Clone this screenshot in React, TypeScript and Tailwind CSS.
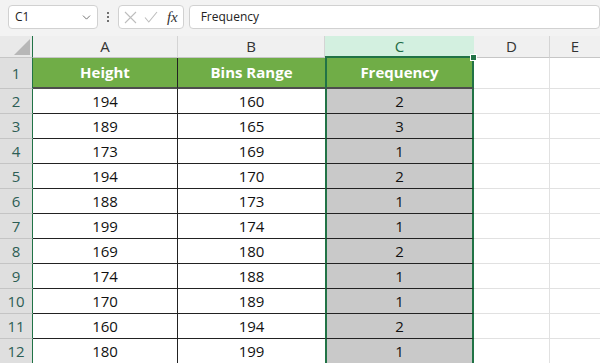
import { ChevronDown } from "lucide-react";

const rows: [number, number, number][] = [
  [194, 160, 2],
  [189, 165, 3],
  [173, 169, 1],
  [194, 170, 2],
  [188, 173, 1],
  [199, 174, 1],
  [169, 180, 2],
  [174, 188, 1],
  [170, 189, 1],
  [160, 194, 2],
  [180, 199, 1],
];

const font = { fontFamily: '"Open Sans", "Noto Sans", sans-serif' };

function Toolbar() {
  return (
    <div className="h-[36px] bg-[#f3f3f3] flex items-start pt-[5px] pl-[8px]">
      <div className="w-[92px] h-[24px] bg-white border border-[#d1d1d1] rounded-[4px] flex items-center justify-between pl-[6px] pr-[4px]">
        <span className="text-[12px] text-[#222]">C1</span>
        <ChevronDown size={13} strokeWidth={1.5} className="text-[#555]" />
      </div>
      <div className="w-[20px] h-[24px] flex flex-col items-center justify-center gap-[2px]">
        <span className="w-[2px] h-[2px] bg-[#444] rounded-full" />
        <span className="w-[2px] h-[2px] bg-[#444] rounded-full" />
        <span className="w-[2px] h-[2px] bg-[#444] rounded-full" />
      </div>
      <div className="w-[67px] h-[24px] bg-white border border-[#d1d1d1] rounded-[4px] flex items-center pl-[5px] gap-[7px]">
        <svg width="13" height="13" viewBox="0 0 13 13" fill="none" stroke="#bdbdbd" strokeWidth="1.1">
          <path d="M1 1 L12 12 M12 1 L1 12" />
        </svg>
        <svg width="14" height="12" viewBox="0 0 14 12" fill="none" stroke="#bdbdbd" strokeWidth="1.1">
          <path d="M1 6.5 L4.8 11 L13 1" />
        </svg>
        <span
          className="text-[15px] italic text-[#333] leading-none ml-[2px]"
          style={{ fontFamily: '"Liberation Serif", "DejaVu Serif", serif' }}
        >
          fx
        </span>
      </div>
      <div className="w-[420px] h-[24px] ml-[5px] bg-white border border-[#d1d1d1] rounded-[4px] flex items-center pl-[11px]">
        <span className="text-[12px] text-[#222]">Frequency</span>
      </div>
    </div>
  );
}

function ColumnHeaders() {
  return (
    <div className="h-[22px] flex text-[15px] text-[#333]">
      <div className="w-[33px] bg-[#e9e9e9] border-r border-r-[#217346] border-b border-b-[#c6c6c6] relative">
        <svg className="absolute right-[2px] bottom-[2px]" width="16" height="16" viewBox="0 0 16 16">
          <path d="M0 16 L16 0 L16 16 Z" fill="#b7b7b7" />
        </svg>
      </div>
      <div className="w-[145px] bg-[#f0f0f0] border-r border-[#d4d4d4] border-b border-b-[#c6c6c6] flex items-center justify-center">A</div>
      <div className="w-[147px] bg-[#f0f0f0] border-r border-[#d4d4d4] border-b border-b-[#c6c6c6] flex items-center justify-center">B</div>
      <div className="w-[149px] bg-[#d3f0e0] border-b-2 border-b-[#217346] flex items-center justify-center text-[#1f6b45]">C</div>
      <div className="w-[76px] bg-[#f0f0f0] border-r border-[#d4d4d4] border-b border-b-[#c6c6c6] flex items-center justify-center">D</div>
      <div className="flex-1 bg-[#f0f0f0] border-b border-b-[#c6c6c6] flex items-center justify-center">E</div>
    </div>
  );
}

function RowHeader({ n, h }: { n: number; h: string }) {
  return (
    <div className={`w-[33px] ${h} bg-[#dfdfdf] border-r border-r-[#217346] border-b border-b-[#c4c4c4] flex items-center justify-center text-[15px] text-[#2d5e55]`}>
      {n}
    </div>
  );
}

export default function App() {
  return (
    <div className="w-[600px] h-[363px] overflow-hidden bg-white" style={font}>
      <Toolbar />
      <ColumnHeaders />
      {/* header row */}
      <div className="h-[31px] flex">
        <RowHeader n={1} h="h-[31px]" />
        <div className="w-[145px] bg-[#70ad47] border-r border-r-[#222] border-b-2 border-b-[#4d4d4d] flex items-center justify-center text-[15px] font-bold text-white">
          Height
        </div>
        <div className="w-[147px] bg-[#70ad47] border-b-2 border-b-[#4d4d4d] flex items-center justify-center text-[15px] font-bold text-white">
          Bins Range
        </div>
        <div className="w-[149px] relative bg-[#70ad47] border-x-2 border-x-[#217346] border-b-2 border-b-[#4d4d4d] flex items-center justify-center text-[15px] font-bold text-white">
          Frequency
          <span className="absolute right-[-5px] top-[-4px] w-[7px] h-[7px] bg-[#217346] border border-white" />
        </div>
        <div className="w-[76px] border-r border-[#e1e1e1] border-b border-b-[#e1e1e1]" />
        <div className="flex-1 border-b border-[#e1e1e1]" />
      </div>
      {rows.map(([a, b, c], i) => (
        <div key={i} className="h-[25px] flex text-[15px] text-[#111]">
          <RowHeader n={i + 2} h="h-[25px]" />
          <div className="w-[145px] border-r border-r-[#222] border-b border-b-[#222] flex items-center justify-center">{a}</div>
          <div className="w-[147px] border-b border-b-[#222] flex items-center justify-center">{b}</div>
          <div className="w-[149px] bg-[#c9c9c9] border-x-2 border-x-[#217346] border-b border-b-[#222] flex items-center justify-center">{c}</div>
          <div className="w-[76px] border-r border-[#e1e1e1] border-b border-b-[#e1e1e1]" />
          <div className="flex-1 border-b border-[#e1e1e1]" />
        </div>
      ))}
    </div>
  );
}
